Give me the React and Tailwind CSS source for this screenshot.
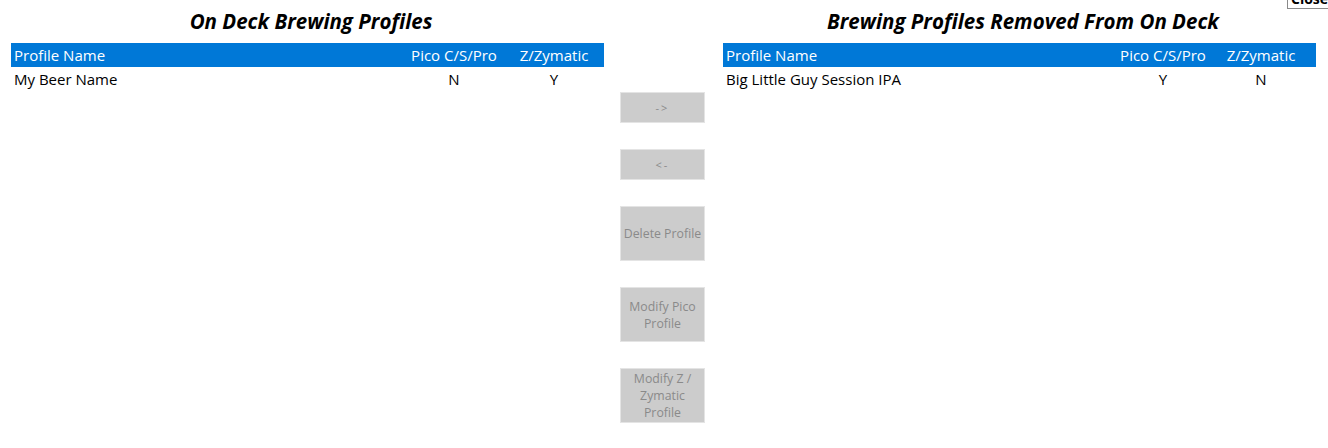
const onDeck = [{ name: 'My Beer Name', pico: 'N', zymatic: 'Y' }];
const removed = [{ name: 'Big Little Guy Session IPA', pico: 'Y', zymatic: 'N' }];

const font = { fontFamily: '"Open Sans", "Noto Sans", sans-serif' };

function ProfileTable({ title, rows, cols }) {
    return (
        <div className="w-[593px] shrink-0">
            <div className="h-[43px] flex items-center justify-center pl-[7px]">
                <h2 className="text-[20.5px] font-bold italic text-black">{title}</h2>
            </div>
            <div className={`grid ${cols} h-[24px] items-center bg-[#0078d7] text-white text-[15px]`}>
                <span className="pl-[3px]">Profile Name</span>
                <span className="text-center">Pico C/S/Pro</span>
                <span className="text-center">Z/Zymatic</span>
            </div>
            {rows.map((r) => (
                <div key={r.name} className={`grid ${cols} h-[24px] items-center text-black text-[15px]`}>
                    <span className="pl-[3px]">{r.name}</span>
                    <span className="text-center">{r.pico}</span>
                    <span className="text-center">{r.zymatic}</span>
                </div>
            ))}
        </div>
    );
}

function ActionButton({ children, tall }) {
    return (
        <button
            className={`w-[85px] ${tall ? 'h-[55px]' : 'h-[31px]'} bg-[#cccccc] border border-[#e4e4e4] text-[#8a8a8a] text-[12.3px] leading-[17px] flex items-center justify-center text-center px-0`}
        >
            {children}
        </button>
    );
}

export default function App() {
    return (
        <div className="relative w-[1328px] h-[448px] bg-white overflow-hidden" style={font}>
            {/* Close button, clipped by the top edge */}
            <div className="absolute left-[1287px] top-[-11px] w-[60px] h-[20px] border border-[#8a8a8a] bg-white pl-[3px] text-[14px] font-bold text-black leading-[18px]">
                Close
            </div>

            <div className="flex pl-[11px]">
                <ProfileTable title="On Deck Brewing Profiles" rows={onDeck} cols="grid-cols-[393px_100px_100px]" />

                {/* Middle actions */}
                <div className="w-[119px] shrink-0 pt-[92px] pl-[16px] flex flex-col gap-[26px]">
                    <ActionButton>
                        <span className="text-[11px] tracking-[2px]">-&gt;</span>
                    </ActionButton>
                    <ActionButton>
                        <span className="text-[11px] tracking-[2px]">&lt;-</span>
                    </ActionButton>
                    <ActionButton tall>
                        <span className="whitespace-nowrap">Delete Profile</span>
                    </ActionButton>
                    <ActionButton tall>
                        <span>Modify Pico<br />Profile</span>
                    </ActionButton>
                    <ActionButton tall>
                        <span>Modify Z /<br />Zymatic<br />Profile</span>
                    </ActionButton>
                </div>

                <ProfileTable
                    title="Brewing Profiles Removed From On Deck"
                    rows={removed}
                    cols="grid-cols-[391px_98px_98px_6px]"
                />
            </div>
        </div>
    );
}
